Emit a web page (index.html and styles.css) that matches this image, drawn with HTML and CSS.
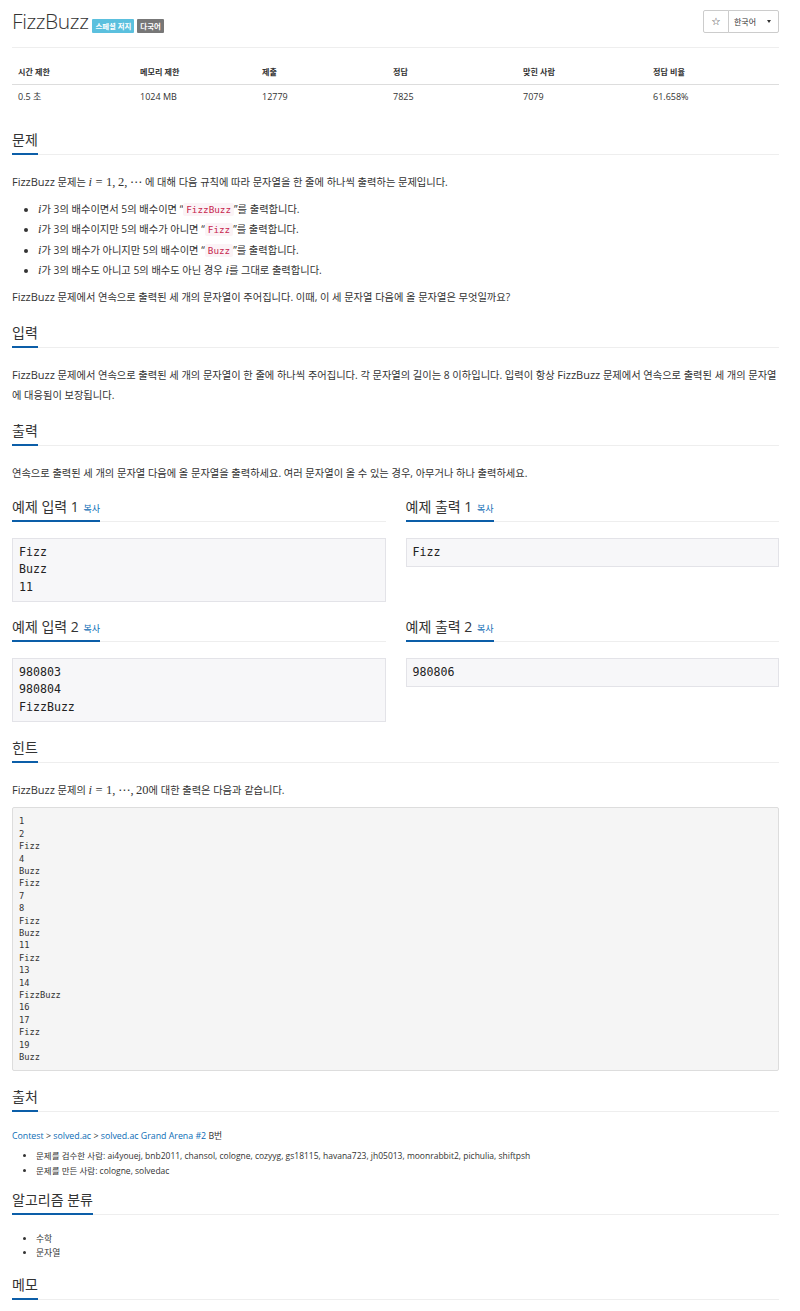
FILE: index.html
```html
<!DOCTYPE html>
<html lang="ko">
<head>
<meta charset="utf-8">
<title>FizzBuzz</title>
<link rel="stylesheet" href="styles.css">
</head>
<body>
<div class="page">
  <div class="page-header">
    <h1 class="title"><span class="title-text">FizzBuzz</span><span class="label label-info">스페셜 저지</span><span class="label label-default">다국어</span></h1>
    <div class="btn-group">
      <button class="btn btn-star">☆</button>
      <button class="btn btn-lang">한국어<span class="caret"></span></button>
    </div>
  </div>

  <table class="info-table">
    <thead>
      <tr><th>시간 제한</th><th>메모리 제한</th><th>제출</th><th>정답</th><th>맞힌 사람</th><th>정답 비율</th></tr>
    </thead>
    <tbody>
      <tr><td>0.5 초</td><td>1024 MB</td><td>12779</td><td>7825</td><td>7079</td><td>61.658%</td></tr>
    </tbody>
  </table>

  <section class="section sec-problem">
    <h2 class="headline"><span class="ht">문제</span></h2>
    <div class="text">
      <p><span class="en">FizzBuzz</span> 문제는 <span class="math"><i>i</i><span class="rel">=</span>1<span class="punct">,</span>2<span class="punct">,</span>⋯</span> 에 대해 다음 규칙에 따라 문자열을 한 줄에 하나씩 출력하는 문제입니다.</p>
      <ul>
        <li><span class="math"><i>i</i></span>가 3의 배수이면서 5의 배수이면 “<code>FizzBuzz</code>”를 출력합니다.</li>
        <li><span class="math"><i>i</i></span>가 3의 배수이지만 5의 배수가 아니면 “<code>Fizz</code>”를 출력합니다.</li>
        <li><span class="math"><i>i</i></span>가 3의 배수가 아니지만 5의 배수이면 “<code>Buzz</code>”를 출력합니다.</li>
        <li><span class="math"><i>i</i></span>가 3의 배수도 아니고 5의 배수도 아닌 경우 <span class="math"><i>i</i></span>를 그대로 출력합니다.</li>
      </ul>
      <p><span class="en">FizzBuzz</span> 문제에서 연속으로 출력된 세 개의 문자열이 주어집니다. 이때, 이 세 문자열 다음에 올 문자열은 무엇일까요?</p>
    </div>
  </section>

  <section class="section">
    <h2 class="headline"><span class="ht">입력</span></h2>
    <div class="text">
      <p><span class="en">FizzBuzz</span> 문제에서 연속으로 출력된 세 개의 문자열이 한 줄에 하나씩 주어집니다. 각 문자열의 길이는 8 이하입니다. 입력이 항상 <span class="en">FizzBuzz</span> 문제에서 연속으로 출력된 세 개의 문자열에 대응됨이 보장됩니다.</p>
    </div>
  </section>

  <section class="section">
    <h2 class="headline"><span class="ht">출력</span></h2>
    <div class="text">
      <p>연속으로 출력된 세 개의 문자열 다음에 올 문자열을 출력하세요. 여러 문자열이 올 수 있는 경우, 아무거나 하나 출력하세요.</p>
    </div>
  </section>

  <div class="samples">
    <section class="sample">
      <h2 class="headline"><span class="ht">예제 입력 1 <a class="copy" href="#">복사</a></span></h2>
      <pre class="sampledata">Fizz
Buzz
11</pre>
    </section>
    <section class="sample">
      <h2 class="headline"><span class="ht">예제 출력 1 <a class="copy" href="#">복사</a></span></h2>
      <pre class="sampledata">Fizz</pre>
    </section>
    <section class="sample">
      <h2 class="headline"><span class="ht">예제 입력 2 <a class="copy" href="#">복사</a></span></h2>
      <pre class="sampledata">980803
980804
FizzBuzz</pre>
    </section>
    <section class="sample">
      <h2 class="headline"><span class="ht">예제 출력 2 <a class="copy" href="#">복사</a></span></h2>
      <pre class="sampledata">980806</pre>
    </section>
  </div>

  <section class="section">
    <h2 class="headline"><span class="ht">힌트</span></h2>
    <div class="text">
      <p><span class="en">FizzBuzz</span> 문제의 <span class="math"><i>i</i><span class="rel">=</span>1<span class="punct">,</span>⋯<span class="punct">,</span>20</span>에 대한 출력은 다음과 같습니다.</p>
      <pre class="hint-pre">1
2
Fizz
4
Buzz
Fizz
7
8
Fizz
Buzz
11
Fizz
13
14
FizzBuzz
16
17
Fizz
19
Buzz</pre>
    </div>
  </section>

  <section class="section sec-source">
    <h2 class="headline"><span class="ht">출처</span></h2>
    <div class="source">
      <p><a href="#">Contest</a> &gt; <a href="#">solved.ac</a> &gt; <a href="#">solved.ac Grand Arena #2</a> B번</p>
      <ul>
        <li>문제를 검수한 사람: ai4youej, bnb2011, chansol, cologne, cozyyg, gs18115, havana723, jh05013, moonrabbit2, pichulia, shiftpsh</li>
        <li>문제를 만든 사람: cologne, solvedac</li>
      </ul>
    </div>
  </section>

  <section class="section sec-tags">
    <h2 class="headline"><span class="ht">알고리즘 분류</span></h2>
    <ul class="tags">
      <li>수학</li>
      <li>문자열</li>
    </ul>
  </section>

  <section class="section sec-memo">
    <h2 class="headline"><span class="ht">메모</span></h2>
  </section>
</div>
</body>
</html>
```

FILE: styles.css
```css
* { box-sizing: border-box; }
html, body { margin: 0; padding: 0; background: #fff; }
body {
  font-family: "Open Sans", "Noto Sans CJK KR", sans-serif;
  color: #333;
  font-size: 10.25px;
  line-height: 20px;
}
.page { padding: 0 21px 0 12px; }

/* header */
.page-header {
  display: flex;
  justify-content: space-between;
  align-items: flex-start;
  height: 48px;
  padding-top: 10px;
  border-bottom: 1px solid #eee;
}
.title { display: flex; align-items: flex-end; margin: 0; font-weight: 300; }
.title-text {
  font-size: 21px;
  line-height: 23px;
  font-weight: 300;
  letter-spacing: -0.4px;
  color: #333;
}
.label {
  display: inline-block;
  height: 14px;
  line-height: 14px;
  padding: 0 3px;
  font-size: 7.4px;
  font-weight: 700;
  color: #fff;
  border-radius: 1px;
  white-space: nowrap;
}
.label-info { background: #5bc0de; margin-left: 4px; }
.label-default { background: #777; margin-left: 3px; }

.btn-group { display: flex; height: 23px; }
.btn {
  height: 23px;
  border: 1px solid #ccc;
  background: #fff;
  color: #333;
  margin: 0;
  padding: 0;
  font-family: inherit;
}
.btn-star {
  width: 26px;
  border-radius: 2px 0 0 2px;
  font-family: "DejaVu Sans", sans-serif;
  font-size: 10.5px;
  line-height: 21px;
}
.btn-lang {
  width: 51px;
  margin-left: -1px;
  border-radius: 0 2px 2px 0;
  display: flex;
  align-items: center;
  padding-left: 5px;
  font-size: 8px;
}
.caret {
  margin-left: auto;
  margin-right: 7px;
  width: 0;
  height: 0;
  border-top: 3px solid #333;
  border-left: 2.5px solid transparent;
  border-right: 2.5px solid transparent;
}

/* info table */
.info-table {
  width: 100%;
  border-collapse: collapse;
  table-layout: fixed;
  margin-top: 12px;
}
.info-table th, .info-table td {
  padding: 5px 6px;
  line-height: 14px;
  text-align: left;
  vertical-align: middle;
}
.info-table th { font-size: 8.1px; font-weight: 700; border-bottom: 1px solid #ddd; }
.info-table td { font-size: 9px; }
.info-table th:nth-child(1), .info-table th:nth-child(2) { width: 122px; }
.info-table th:nth-child(3) { width: 131px; }
.info-table th:nth-child(4), .info-table th:nth-child(5) { width: 130px; }

/* sections */
.section { margin-top: 16px; }
.sec-problem { margin-top: 21px; }
.sec-tags { margin-top: 12px; }
.sec-memo { margin-top: 15px; }

.headline {
  display: flex;
  margin: 0 0 17px;
  border-bottom: 1px solid #eee;
  font-size: 14px;
  font-weight: 400;
  line-height: 20px;
  color: #333;
}
.headline .ht {
  display: inline-block;
  height: 25px;
  padding-bottom: 3px;
  border-bottom: 2px solid #0c5ea8;
  margin-bottom: -1px;
  white-space: nowrap;
}
.copy { font-size: 9px; color: #0b6cb5; margin-left: 1px; text-decoration: none; line-height: 1; }

.text p { margin: 0 0 7px; }
.text ul { margin: 0 0 7px; padding-left: 26px; }
.text li { line-height: 20.33px; }
.text > :last-child { margin-bottom: 0; }
.en { font-size: 11px; line-height: 1; }

.math {
  font-family: "Liberation Serif", "DejaVu Serif", "DejaVu Sans", serif;
  font-size: 12.5px;
  line-height: 1;
}
.math i { font-style: italic; }
.math .rel { margin: 0 3.5px; }
.math .punct { margin-right: 2.5px; }

code {
  font-family: "DejaVu Sans Mono", monospace;
  font-size: 9.3px;
  line-height: 1;
  color: #c7254e;
  background: #fbf3f6;
  padding: 1px 3px;
  border-radius: 2px;
}

/* samples */
.samples {
  display: grid;
  grid-template-columns: 1fr 1fr;
  column-gap: 20px;
  row-gap: 15px;
  margin-top: 14px;
}
.sample .headline { margin-bottom: 15.5px; }
.sampledata {
  margin: 0;
  padding: 5px 6px;
  border: 1px solid #e3e3e8;
  background: #f7f7f9;
  font-family: "DejaVu Sans Mono", monospace;
  font-size: 11.6px;
  line-height: 17.5px;
  color: #222;
}
.hint-pre {
  margin: 0;
  padding: 7px 6px;
  border: 1px solid #ddd;
  border-radius: 2px;
  background: #f5f5f5;
  font-family: "DejaVu Sans Mono", monospace;
  font-size: 8.7px;
  line-height: 12.4px;
  color: #333;
}

/* source & tags */
.source p { margin: 0; font-size: 8.8px; line-height: 14px; }
.source a { color: #0b6cb5; text-decoration: none; }
.source ul { margin: 4.5px 0 0; padding-left: 24px; font-size: 8.5px; line-height: 15px; }
.tags { margin: 0; padding-left: 24px; font-size: 8.8px; line-height: 14px; }
```
